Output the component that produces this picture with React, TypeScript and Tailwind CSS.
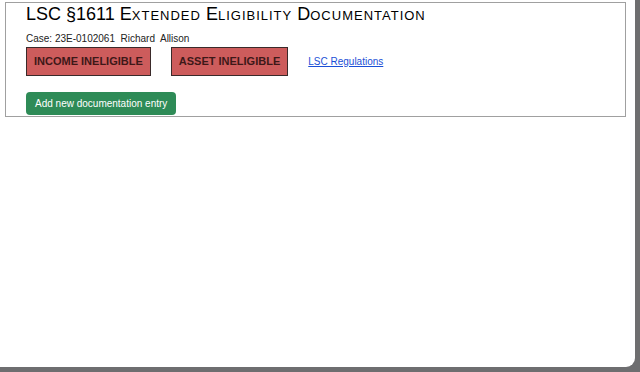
const words = ["Extended", "Eligibility", "Documentation"];

export default function App() {
  return (
    <div className="w-[640px] h-[372px] bg-[#6e6e70]" style={{ fontFamily: '"Liberation Sans", Arial, sans-serif' }}>
      <div className="w-[635px] h-[367px] bg-white rounded-br-[9px] pt-[2px] pl-[5px]">
        <div className="w-[621px] border border-[#a0a0a0] pl-[20px] pb-[1px]">
          <h1 className="text-[18px] leading-[22px] text-black">
            LSC §1611
            {words.map((w) => (
              <span key={w}>
                {" "}
                {w[0].toUpperCase()}
                <span className="text-[13px] tracking-[1px]">{w.slice(1).toUpperCase()}</span>
              </span>
            ))}
          </h1>
          <div className="text-[10px] leading-[12px] text-[#222] mt-[6px]">
            Case: 23E-0102061&nbsp; Richard&nbsp; Allison
          </div>
          <div className="flex items-center mt-[2px]">
            <div className="h-[29px] px-[7px] flex items-center bg-[#cd5c5c] border border-[#3a2a2a] text-[11px] font-bold text-[#3d1818]">
              INCOME INELIGIBLE
            </div>
            <div className="h-[29px] px-[7px] ml-[20px] flex items-center bg-[#cd5c5c] border border-[#3a2a2a] text-[11px] font-bold text-[#3d1818]">
              ASSET INELIGIBLE
            </div>
            <a href="#" className="ml-[20px] text-[10px] text-[#1a4fd6] underline">
              LSC Regulations
            </a>
          </div>
          <button className="mt-[16px] h-[23px] px-[9px] rounded-[4px] bg-[#2e8b57] text-white text-[10px]">
            Add new documentation entry
          </button>
        </div>
      </div>
    </div>
  );
}
